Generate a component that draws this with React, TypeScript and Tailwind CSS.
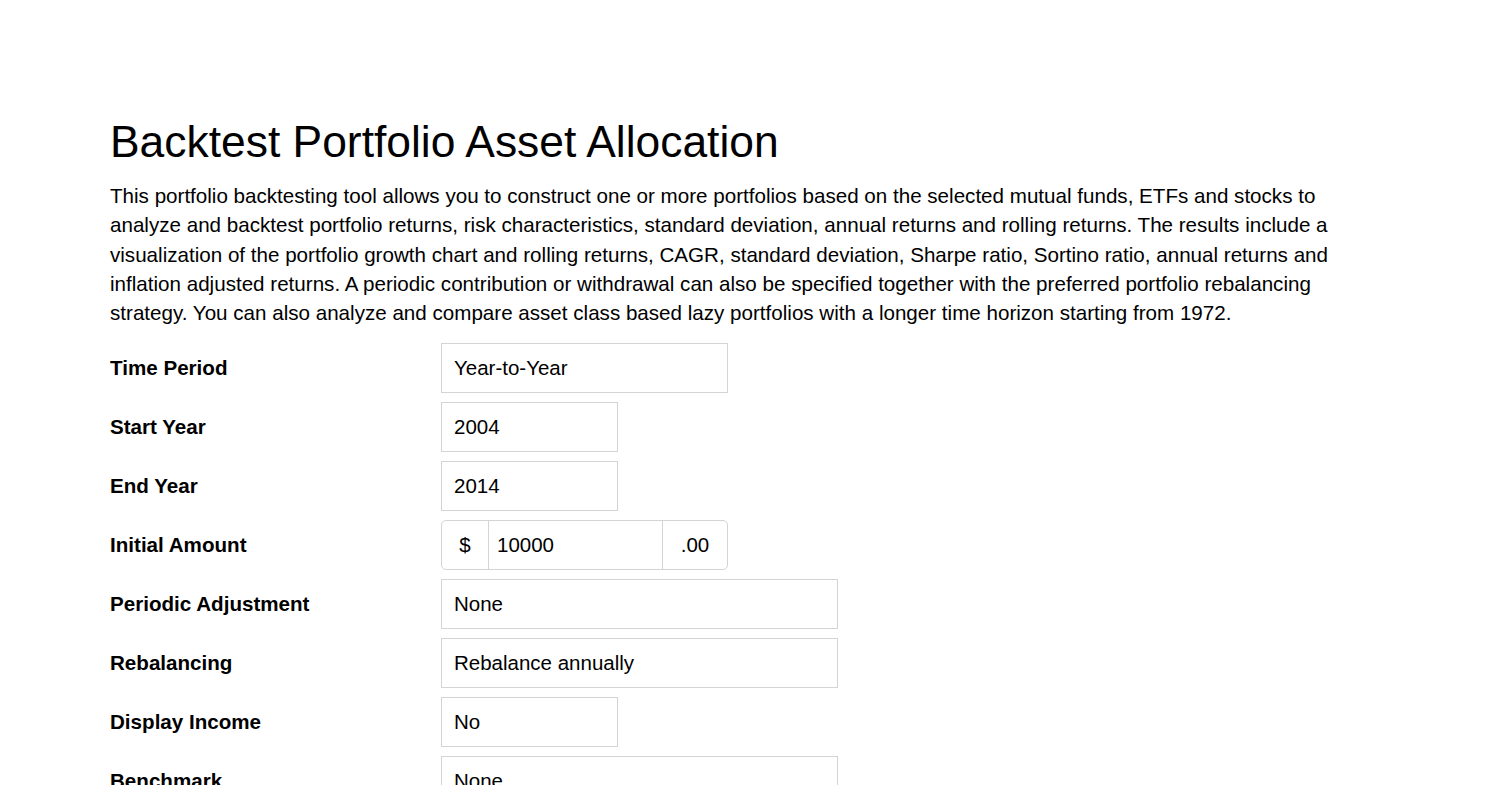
import React from "react";

const rows: { label: string; value: string; w: string; group?: boolean }[] = [
  { label: "Time Period", value: "Year-to-Year", w: "w-[287px]" },
  { label: "Start Year", value: "2004", w: "w-[177px]" },
  { label: "End Year", value: "2014", w: "w-[177px]" },
  { label: "Initial Amount", value: "10000", w: "w-[287px]", group: true },
  { label: "Periodic Adjustment", value: "None", w: "w-[397px]" },
  { label: "Rebalancing", value: "Rebalance annually", w: "w-[397px]" },
  { label: "Display Income", value: "No", w: "w-[177px]" },
  { label: "Benchmark", value: "None", w: "w-[397px]" },
];

export default function App() {
  return (
    <div className="min-h-screen bg-white text-black" style={{ fontFamily: '"Liberation Sans", Arial, sans-serif' }}>
      <div className="mx-auto w-[1280px] pt-[114px]">
        <h1 className="text-[44.4px] leading-[56px] font-normal">Backtest Portfolio Asset Allocation</h1>
        <p className="mt-[11px] text-[20.6px] leading-[29.25px] pr-[30px]">
          This portfolio backtesting tool allows you to construct one or more portfolios based on the selected mutual funds, ETFs and stocks to analyze and backtest portfolio returns, risk characteristics, standard deviation, annual returns and rolling returns. The results include a visualization of the portfolio growth chart and rolling returns, CAGR, standard deviation, Sharpe ratio, Sortino ratio, annual returns and inflation adjusted returns. A periodic contribution or withdrawal can also be specified together with the preferred portfolio rebalancing strategy. You can also analyze and compare asset class based lazy portfolios with a longer time horizon starting from 1972.
        </p>
        <div className="mt-[16px] flex flex-col gap-[9px]">
          {rows.map((r) => (
            <div key={r.label} className="flex items-center h-[50px]">
              <div className="w-[331px] text-[20.6px] font-bold">{r.label}</div>
              {r.group ? (
                <div className={`${r.w} h-[50px] flex border border-[#d4d4d4] rounded-[5px] text-[20.5px]`}>
                  <div className="w-[47px] flex items-center justify-center border-r border-[#d4d4d4]">$</div>
                  <div className="flex-1 flex items-center pl-[8px] border-r border-[#d4d4d4]">{r.value}</div>
                  <div className="w-[64px] flex items-center justify-center">.00</div>
                </div>
              ) : (
                <div className={`${r.w} h-[50px] flex items-center pl-[12px] border border-[#d4d4d4] text-[20.5px]`}>{r.value}</div>
              )}
            </div>
          ))}
        </div>
      </div>
    </div>
  );
}
